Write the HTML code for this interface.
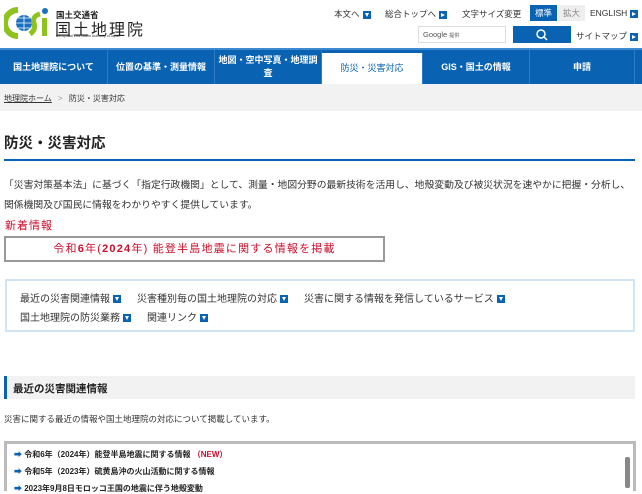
<!DOCTYPE html>
<html><head><meta charset="utf-8"><style>
*{margin:0;padding:0;box-sizing:border-box}
body{width:642px;height:488px;overflow:hidden;background:#fff;font-family:"Liberation Sans","Noto Sans CJK JP",sans-serif;color:#333;position:relative}
.a{position:absolute;white-space:nowrap}
.ic{display:inline-block;width:8px;height:8px;background:#0a62b3;vertical-align:middle;margin-left:3px;position:relative}
.ic:after{content:"";position:absolute;left:2px;top:2px;border-left:2px solid transparent;border-right:2px solid transparent;border-top:4px solid #fff}
.ir:after{left:2px;top:2px;border-top:2px solid transparent;border-bottom:2px solid transparent;border-left:4px solid #fff;border-right:0}
.nav{position:absolute;left:0;top:48px;width:642px;height:36px;background:#0a62b3;border-top:2px solid #3d8ad0}
.nav div{position:absolute;top:0;height:34px;display:flex;align-items:center;justify-content:center;text-align:center;color:#fff;font-size:9px;font-weight:bold;line-height:13px;border-right:1px solid #2f7cc4;padding:0 3px}
</style></head><body>
<svg class="a" style="left:4px;top:6px" width="46" height="34" viewBox="0 0 46 34">
<path d="M14 4 A12 12 0 1 0 14 30" fill="none" stroke="#8dc21f" stroke-width="6"/>
<circle cx="20" cy="17" r="8" fill="#1a6fc0"/>
<path d="M12 17h16M20 9v16M14 12h12M14 22h12" stroke="#fff" stroke-width="0.8"/>
<path d="M36 8 Q28 10 30 17 Q32 24 26 28" fill="none" stroke="#8dc21f" stroke-width="5"/>
<rect x="38" y="12" width="5" height="18" fill="#8dc21f"/><circle cx="41" cy="5" r="3" fill="#1a6fc0"/>
</svg>
<div class="a" style="left:56px;top:9px;font-size:8.5px;font-weight:bold;color:#222">国土交通省</div>
<div class="a" style="left:55px;top:16px;font-size:16px;color:#222;letter-spacing:2px">国土地理院</div>
<div class="a" style="left:56px;top:34px;font-size:3.5px;color:#333">Geospatial Information Authority of Japan</div>
<div class="a" style="left:334px;top:8px;font-size:8.5px">本文へ<span class="ic"></span></div>
<div class="a" style="left:385px;top:8px;font-size:8.5px">総合トップへ<span class="ic ir"></span></div>
<div class="a" style="left:462px;top:8px;font-size:8.5px">文字サイズ変更</div>
<div class="a" style="left:530px;top:5px;width:27px;height:16px;background:#0a62b3;color:#fff;font-size:8.5px;text-align:center;line-height:16px">標準</div>
<div class="a" style="left:558px;top:5px;width:27px;height:16px;background:#eee;color:#888;font-size:8.5px;text-align:center;line-height:16px">拡大</div>
<div class="a" style="left:590px;top:8px;font-size:8.5px">ENGLISH<span class="ic ir"></span></div>
<div class="a" style="left:418px;top:26px;width:88px;height:17px;border:1px solid #ddd;font-size:7.5px;color:#555;line-height:15px;padding-left:4px">Google <span style="font-size:5px">提供</span></div>
<div class="a" style="left:513px;top:26px;width:58px;height:17px;background:#0a62b3"><svg width="58" height="17"><circle cx="28" cy="8" r="4" fill="none" stroke="#fff" stroke-width="1.5"/><path d="M31 11l3 3" stroke="#fff" stroke-width="1.5"/></svg></div>
<div class="a" style="left:576px;top:30px;font-size:8.5px">サイトマップ<span class="ic ir"></span></div>
<div class="nav">
<div style="left:0;width:108px">国土地理院について</div>
<div style="left:108px;width:107px">位置の基準・測量情報</div>
<div style="left:215px;width:107px">地図・空中写真・地理調<br>査</div>
<div style="left:322px;width:101px;background:#fff;color:#0a62b3;font-weight:normal;top:3px;height:31px">防災・災害対応</div>
<div style="left:423px;width:107px">GIS・国土の情報</div>
<div style="left:530px;width:105px">申請</div>
</div>
<div class="a" style="left:0;top:84px;width:642px;height:27px;background:#f2f2f2"></div>
<div class="a" style="left:4px;top:93px;font-size:8px"><span style="text-decoration:underline">地理院ホーム</span> <span style="color:#999;margin:0 4px">&gt;</span> 防災・災害対応</div>
<div class="a" style="left:4px;top:132px;font-size:14.5px;font-weight:bold;color:#222">防災・災害対応</div>
<div class="a" style="left:4px;top:159px;width:631px;height:2px;background:#0a62b3"></div>
<div class="a" style="left:4px;top:176px;font-size:9.8px;line-height:20px">「災害対策基本法」に基づく「指定行政機関」として、測量・地図分野の最新技術を活用し、地殻変動及び被災状況を速やかに把握・分析し、<br>関係機関及び国民に情報をわかりやすく提供しています。</div>
<div class="a" style="left:5px;top:217px;font-size:11px;color:#c8102e;letter-spacing:1px">新着情報</div>
<div class="a" style="left:4px;top:236px;width:381px;height:26px;border:2px solid #999;color:#c8102e;font-size:11px;text-align:center;line-height:22px;letter-spacing:1.2px">令和<b>6</b>年(<b>2024</b>年) 能登半島地震に関する情報を掲載</div>
<div class="a" style="left:5px;top:279px;width:630px;height:53px;border:2px solid #cfe4f5"></div>
<div class="a" style="left:20px;top:290px;font-size:10px">最近の災害関連情報<span class="ic"></span><span style="margin-left:16px">災害種別毎の国土地理院の対応</span><span class="ic"></span><span style="margin-left:16px">災害に関する情報を発信しているサービス</span><span class="ic"></span></div>
<div class="a" style="left:20px;top:309px;font-size:10px">国土地理院の防災業務<span class="ic"></span><span style="margin-left:16px">関連リンク</span><span class="ic"></span></div>
<div class="a" style="left:4px;top:376px;width:631px;height:23px;background:#f2f2f2;border-left:3px solid #0a62b3"></div>
<div class="a" style="left:13px;top:381px;font-size:10.5px;font-weight:bold;color:#222">最近の災害関連情報</div>
<div class="a" style="left:4px;top:413px;font-size:8.5px">災害に関する最近の情報や国土地理院の対応について掲載しています。</div>
<div class="a" style="left:4px;top:441px;width:632px;height:50px;border:3px solid #bbb;border-bottom:0"></div>
<div class="a" style="left:625px;top:457px;width:5px;height:31px;background:#888;border-radius:2px"></div>
<div class="a" style="left:14px;top:449px;font-size:8px;font-weight:bold;color:#222"><span style="color:#0a62b3">➡</span> 令和6年（2024年）能登半島地震に関する情報 <span style="color:#c8102e">（NEW）</span></div>
<div class="a" style="left:14px;top:466px;font-size:8px;font-weight:bold;color:#222"><span style="color:#0a62b3">➡</span> 令和5年（2023年）硫黄島沖の火山活動に関する情報</div>
<div class="a" style="left:14px;top:483px;font-size:8px;font-weight:bold;color:#222"><span style="color:#0a62b3">➡</span> 2023年9月8日モロッコ王国の地震に伴う地殻変動</div>
</body></html>
